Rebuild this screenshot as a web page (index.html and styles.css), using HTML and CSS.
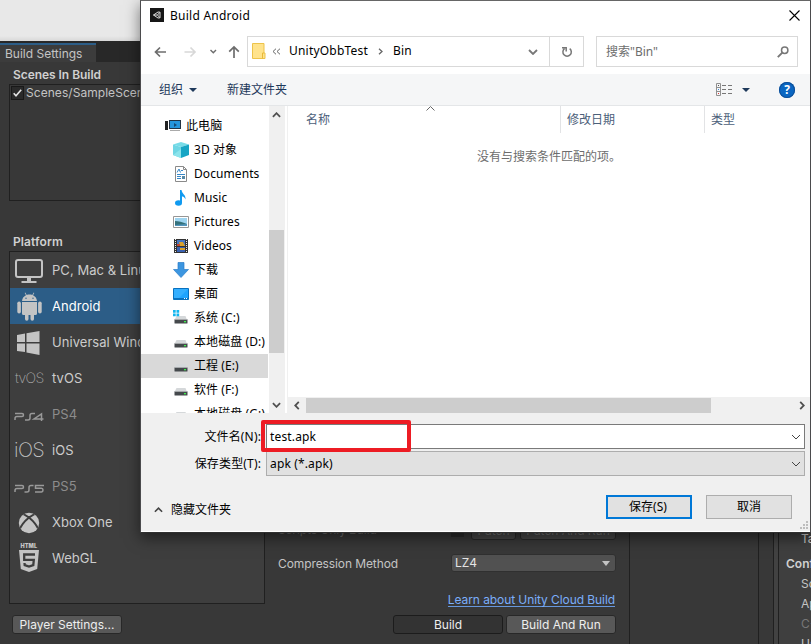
FILE: index.html
```html
<!DOCTYPE html>
<html lang="zh-CN">
<head>
<meta charset="utf-8">
<title>Build Android</title>
<link rel="stylesheet" href="styles.css">
</head>
<body>
<svg width="0" height="0" class="defs">
  <symbol id="drive" viewBox="0 0 16 16"><path d="M3.500 6h9l1.500 4H1.500z" fill="#d5d8da"/><rect x="1.500" y="9.500" width="13" height="4" rx=".5" fill="#45494c"/><rect x="1.500" y="9" width="13" height="1" fill="#a5a8aa"/><rect x="11" y="11" width="2" height="1.300" fill="#3ff04c"/></symbol>
  <symbol id="chev" viewBox="0 0 10 6"><path d="M1 1l4 4 4-4" fill="none" stroke="currentColor"/></symbol>
</svg>
<div class="desktop">
  <section class="settings">
    <div class="tabs"><div class="tab">Build Settings</div></div>
    <h2 class="scenes-title">Scenes In Build</h2>
    <div class="scenes"><span class="check"><svg width="9" height="8" viewBox="0 0 9 8"><path d="M.7 4.300l2.300 2.500L8.200.8" fill="none" stroke="#e4e4e4" stroke-width="1.600"/></svg></span><span>Scenes/SampleScene</span></div>
    <h2 class="platform-title">Platform</h2>
    <div class="columns">
      <div class="platforms">
        <div class="platform"><svg class="pi" viewBox="0 0 30 30"><rect x="2" y="5" width="26" height="17" rx="2" fill="none" stroke="#c4c4c4" stroke-width="2"/><path d="M13 22h4v4h5.500v2H7.500v-2H13z" fill="#c4c4c4"/></svg>PC, Mac &amp; Linux Standalone</div>
        <div class="platform active"><svg class="pi" viewBox="0 0 30 30" fill="#c4c4c4"><path d="M8 10c.3-3 2-4.700 4-5.700L10.700 2l.6-.4 1.400 2.300c1.600-.6 4-.6 5.600 0l1.400-2.300.6.400L19 4.300c2 1 3.700 2.700 4 5.700z"/><path d="M8 11h15v11.500a1.500 1.500 0 0 1-1.500 1.500H20v4a1.700 1.700 0 0 1-3.500 0v-4h-2v4a1.700 1.700 0 0 1-3.500 0v-4H9.500A1.500 1.500 0 0 1 8 22.500z"/><rect x="3.300" y="10.500" width="3.600" height="12" rx="1.800"/><rect x="24.100" y="10.500" width="3.600" height="12" rx="1.800"/><circle cx="12" cy="7.300" r=".7" fill="#2c5d87"/><circle cx="19" cy="7.300" r=".7" fill="#2c5d87"/></svg>Android</div>
        <div class="platform"><svg class="pi" viewBox="0 0 30 30"><path d="M3 8l8-1.400V15H3zM12.500 6.300L25.500 4v11h-13zM3 16.500h8v8.600L3 24zM12.500 16.500h13V28l-13-2.400z" fill="#c4c4c4"/></svg>Universal Windows Platform</div>
        <div class="platform"><span class="wordmark tv">tvOS</span>tvOS</div>
        <div class="platform off"><svg class="pi" viewBox="0 0 30 30"><path d="M1 14.500h7q1.500 0 1.500 1.500T8 17.500H3q-2 0-2 2v1.500M11 21h3q2 0 2-2v-2.500q0-2 2-2h3M27.500 22v-7l-7.500 5h9.500" fill="none" stroke="#999" stroke-width="1.500"/></svg>PS4</div>
        <div class="platform"><span class="wordmark ios">iOS</span>iOS</div>
        <div class="platform off"><svg class="pi" viewBox="0 0 30 30"><path d="M1 14.500h7q1.500 0 1.500 1.500T8 17.500H3q-2 0-2 2v1.500M10.500 21h2.500q2 0 2-2v-2.500q0-2 2-2h2.500M30 14.500h-8.500v2.800h6q1.500 0 1.500 1.800t-1.500 1.900H21" fill="none" stroke="#999" stroke-width="1.500"/></svg>PS5</div>
        <div class="platform"><svg class="pi" viewBox="0 0 30 30"><defs><clipPath id="ball"><circle cx="15" cy="16" r="10.200"/></clipPath></defs><circle cx="15" cy="16" r="10.200" fill="#c4c4c4"/><g clip-path="url(#ball)" fill="none" stroke="#3e3e3e" stroke-width="2"><path d="M4 26Q7 17 15 10.500 23 17 26 26"/><path d="M5 6q5 .5 10 4.500 5-4 10-4.500"/></g></svg>Xbox One</div>
        <div class="platform"><svg class="pi" viewBox="0 0 30 30"><text x="6.500" y="5" class="html-word">HTML</text><path d="M5 7h20l-1.800 19L15 29l-8.200-3z" fill="#c4c4c4"/><path d="M21 11.500H10.200v5.400h9.600l-.5 5.300-4.300 1.400-4.300-1.400-.2-2.200" fill="none" stroke="#3e3e3e" stroke-width="2.300"/></svg>WebGL</div>
      </div>
      <div class="options">
        <div class="opt dim"><span>Scripts Only Build</span><i class="box"></i><b class="ubtn patch">Patch</b><b class="ubtn patchrun">Patch And Run</b></div>
        <div class="opt comp"><span>Compression Method</span><div class="select">LZ4<svg width="8" height="5" viewBox="0 0 8 5"><path d="M0 0h8L4 5z" fill="#c4c4c4"/></svg></div></div>
        <div class="linkrow"><a>Learn about Unity Cloud Build</a></div>
      </div>
    </div>
    <div class="actions"><b class="ubtn player">Player Settings...</b><b class="ubtn build">Build</b><b class="ubtn run">Build And Run</b></div>
  </section>
  <section class="back"></section>
  <section class="gutter"></section>
  <section class="inspector"><p class="in">Target</p><p class="conf">Configuration</p><p class="in">Scripting</p><p class="in">Api</p><p class="in faint">C++</p><p class="in">Use</p></section>
</div>

<div class="dialog">
  <header class="title"><svg width="14" height="14" viewBox="0 0 14 14"><rect width="14" height="14" fill="#161616"/><path d="M3.500 7l4.500-3 2 .2v5.600l-2 .2zM3.500 7h4M7.500 7l2.200-2.500M7.500 7l2.200 2.500" fill="none" stroke="#ddd"/></svg><span>Build Android</span><svg class="close" width="11" height="11" viewBox="0 0 11 11"><path d="M.5.5l10 10M10.500.5l-10 10" stroke="#000" stroke-width="1.100"/></svg></header>
  <div class="nav">
    <div class="arrows"><svg width="90" height="14" viewBox="0 0 90 14" fill="none"><path d="M13 7H2.500M7 2.500L2.500 7 7 11.500" stroke="#6d6d6d" stroke-width="1.700"/><path d="M31.500 7H42M37.500 2.500L42 7l-4.500 4.500" stroke="#d8d8d8" stroke-width="1.700"/><path d="M57.500 5l2.800 2.800L63 5" stroke="#6d6d6d" stroke-width="1.400"/><path d="M81 13V2M76.200 6.700L81 1.900l4.800 4.800" stroke="#6d6d6d" stroke-width="1.700"/></svg></div>
    <div class="address">
      <svg class="folder" width="14" height="17" viewBox="0 0 14 17"><path d="M.5.500h11.500v9.500h1v5.500H.5z" fill="#ffe38c" stroke="#edc34a"/><path d="M10.500 15.500V10h1.500" fill="none" stroke="#e8b93a"/></svg>
      <svg class="dbl" width="9" height="7" viewBox="0 0 9 7"><path d="M4 .7L1 3.500l3 2.800M8 .7L5 3.500l3 2.800" fill="none" stroke="#666"/></svg>
      <span class="crumb">UnityObbTest</span>
      <svg class="sep" width="5" height="7" viewBox="0 0 5 7"><path d="M1 .7l3 2.800-3 2.800" fill="none" stroke="#666" stroke-width="1.300"/></svg>
      <span class="crumb">Bin</span>
      <svg class="drop" width="10" height="6"><path d="M1 1l4 4 4-4" fill="none" stroke="#777" stroke-width="1.800"/></svg>
      <span class="refresh"><svg width="12" height="12" viewBox="0 0 12 12"><path d="M8.700 2.700A4.200 4.200 0 1 1 3.500 2.700M1 1.700h4.200V5.500" fill="none" stroke="#777" stroke-width="1.500"/></svg></span>
    </div>
    <div class="search"><span>搜索"Bin"</span><svg width="12" height="12" viewBox="0 0 12 12"><circle cx="7.700" cy="4.300" r="3.200" fill="none" stroke="#777" stroke-width="1.500"/><path d="M5.300 6.700L.8 11.200" stroke="#777" stroke-width="1.900"/></svg></div>
  </div>
  <div class="toolbar"><span>组织</span><i class="tri"></i><span class="newf">新建文件夹</span>
    <svg class="view" width="17" height="13" viewBox="0 0 17 13"><path d="M.5.500h4v12h-4zM.5 4.500h4M.5 8.500h4" fill="none" stroke="#909090"/><path d="M6 2.500h4M12 2.500h4M6 6.500h4M12 6.500h4M6 10.500h4M12 10.500h4" stroke="#777"/><path d="M2 2.500h1" stroke="#555"/><path d="M2 6.500h1" stroke="#3c8ad8"/><path d="M2 10.500h1" stroke="#d33"/></svg><i class="tri"></i><span class="help">?</span></div>
  <div class="body">
    <div class="tree">
      <div class="node root"><svg viewBox="0 0 16 16"><path d="M0 3h3v9H0z" fill="#222"/><rect x="4.500" y="2.500" width="11" height="8" fill="#2595dc" stroke="#234"/><path d="M9 5l3 2-3 2z" fill="#174a75"/><path d="M5 12.500h10" stroke="#aaa"/></svg>此电脑</div>
      <div class="node"><svg viewBox="0 0 16 16"><path d="M8 0l8 2.500L8 5 0 2.500z" fill="#77dce8"/><path d="M0 2.500L8 5v11l-8-3z" fill="#6fd6e4"/><path d="M16 2.500L8 5v11l8-3z" fill="#16a5c4"/><path d="M0 13l8-6v9z" fill="#8ce4ec"/></svg>3D 对象</div>
      <div class="node"><svg viewBox="0 0 16 16"><path d="M2.500.5h8l3 3v12h-11z" fill="#fff" stroke="#8a8a8a"/><path d="M10.500.5v3h3" fill="none" stroke="#8a8a8a"/><path d="M4 6.500l2-3.500 1.500 3.500M8 4.500h2M4 8.500h8M4 10.500h4M4 12.500h4" fill="none" stroke="#3687c8"/><path d="M9 10h3v3H9z" fill="#5788a5"/></svg>Documents</div>
      <div class="node"><svg viewBox="0 0 16 16"><ellipse cx="5.500" cy="13" rx="3.500" ry="2.700" fill="#109af0"/><path d="M7 13V0h1.500c.5 4 4.500 4.500 4 9.500C11.500 7 10 6.500 9 6.500V13z" fill="#109af0"/></svg>Music</div>
      <div class="node"><svg viewBox="0 0 16 16"><path d="M.5 2.500h15v11H.5z" fill="#fff" stroke="#969696"/><path d="M2 4h12v8H2z" fill="#9ed4f0"/><path d="M2 7q5 0 12 3v2H2z" fill="#34717b"/><path d="M2 11l12-1v2H2z" fill="#5295bd"/></svg>Pictures</div>
      <div class="node"><svg viewBox="0 0 16 16"><path d="M1 1h14v14H1z" fill="#333"/><path d="M4 2h8v6H4z" fill="#4675c0"/><path d="M4 9h8v5H4z" fill="#3961b0"/><path d="M6 4h4l2 4H7zM7 10h5v2H7z" fill="#d9a22b"/><path d="M4 6h3v2H4z" fill="#c44731"/><path d="M2.500 1v14M13.500 1v14" stroke="#eee" stroke-dasharray="1 1"/></svg>Videos</div>
      <div class="node"><svg viewBox="0 0 16 16"><path d="M5 .5h6v7h4.500L8 15.500.5 7.500H5z" fill="#3c96e0" stroke="#2a7dc8" stroke-width=".7"/></svg>下载</div>
      <div class="node"><svg viewBox="0 0 16 16"><path d="M.5 2.500h15v11H.5z" fill="#1ea4ff" stroke="#0871bf"/><path d="M1 3h14L5 13H1z" fill="#34afff"/><path d="M1 12.500h14" stroke="#0871bf"/><path d="M11 12.500h3" stroke="#fff" stroke-dasharray="1 1"/></svg>桌面</div>
      <div class="node"><svg viewBox="0 0 16 16"><use href="#drive"/><path d="M0 0h2.700v2.700H0zM3.500 0h2.700v2.700H3.500zM0 3.500h2.700v2.700H0zM3.500 3.500h2.700v2.700H3.500z" fill="#12b5ee"/></svg>系统 (C:)</div>
      <div class="node"><svg><use href="#drive"/></svg>本地磁盘 (D:)</div>
      <div class="node sel"><svg><use href="#drive"/></svg>工程 (E:)</div>
      <div class="node"><svg><use href="#drive"/></svg>软件 (F:)</div>
      <div class="node"><svg><use href="#drive"/></svg>本地磁盘 (G:)</div>
    </div>
    <div class="vscroll"><svg width="9" height="6" viewBox="0 0 10 6"><path d="M1 5l4-4 4 4" fill="none" stroke="#505050" stroke-width="2"/></svg><i></i><svg width="9" height="6" viewBox="0 0 10 6"><path d="M1 1l4 4 4-4" fill="none" stroke="#505050" stroke-width="2"/></svg></div>
    <div class="files">
      <div class="cols"><span class="c1">名称<svg class="sort" width="9" height="5" viewBox="0 0 9 5"><path d="M.5 4.500l4-4 4 4" fill="none" stroke="#666"/></svg></span><span class="c2">修改日期</span><span class="c3">类型</span></div>
      <p class="empty">没有与搜索条件匹配的项。</p>
      <div class="hscroll"><svg width="6" height="9" viewBox="0 0 6 10"><path d="M5 1L1 5l4 4" fill="none" stroke="#505050" stroke-width="2"/></svg><i></i><svg width="6" height="9" viewBox="0 0 6 10"><path d="M1 1l4 4-4 4" fill="none" stroke="#505050" stroke-width="2"/></svg></div>
    </div>
  </div>
  <footer>
    <div class="field"><label>文件名(N):</label><div class="combo name"><span>test.apk</span><svg width="10" height="6"><use href="#chev"/></svg></div></div>
    <div class="field"><label>保存类型(T):</label><div class="combo type"><span>apk (*.apk)</span><svg width="10" height="6"><use href="#chev"/></svg></div></div>
    <div class="buttons"><svg width="9" height="6" viewBox="0 0 10 6"><path d="M1 5l4-4 4 4" fill="none" stroke="#444" stroke-width="1.800"/></svg><span class="hide">隐藏文件夹</span><b class="save">保存(S)</b><b class="cancel">取消</b></div>
    <svg class="grip" width="8" height="8" fill="#bdbdbd"><path d="M6 0h2v2H6zM3 3h2v2H3zM6 3h2v2H6zM0 6h2v2H0zM3 6h2v2H3zM6 6h2v2H6z"/></svg>
    <div class="highlight"></div>
  </footer>
</div>
</body>
</html>
```
FILE: styles.css
```css
* { box-sizing: border-box; }
body { margin: 0; width: 811px; height: 644px; overflow: hidden; position: relative; background: linear-gradient(#e8e8e8 0 36px, #d8d8d8 41px); }
h2, p { margin: 0; font-size: inherit; }
b { font-weight: 400; }
.defs { position: absolute; }
svg { flex: none; display: block; }

/* editor windows */
.desktop { display: flex; height: 644px; padding-top: 41px; font: 13px/16px Inter, sans-serif; color: #c4c4c4; white-space: nowrap; }
.settings { width: 630px; flex: none; background: #383838; display: flex; flex-direction: column; overflow: hidden; border-right: 1px solid #202020; }
.tabs { height: 21px; flex: none; background: #282828; padding-top: 2px; }
.tab { width: 96px; height: 19px; background: #3c3c3c; border-top: 2px solid #2c5d87; padding: 1px 0 0 5px; font-size: 12px; }
.scenes-title { height: 22px; padding: 5px 0 0 13px; font-weight: 600; font-size: 12px; letter-spacing: -.05px; color: #d0d0d0; }
.scenes { margin-left: 9px; height: 117px; border: 1px solid #202020; display: flex; padding: 0 0 0 1px; gap: 2px; font-size: 12px; letter-spacing: .05px; }
.check { width: 13px; height: 14px; margin-top: 1px; background: #2a2a2a; border: 1px solid #191919; display: flex; align-items: center; justify-content: center; }
.platform-title { height: 50px; padding: 33px 0 0 13px; font-weight: 600; font-size: 12px; color: #d0d0d0; letter-spacing: .1px; }
.columns { display: flex; height: 353px; flex: none; }
.platforms { width: 256px; margin-left: 9px; border: 1px solid #202020; background: #3e3e3e; flex: none; }
.platform { display: flex; align-items: center; height: 36px; padding-left: 4px; color: #ccc; letter-spacing: .05px; overflow: hidden; }
.platform.active { background: #2c5d87; color: #fff; }
.platform.off { color: #8c8c8c; }
.pi { width: 30px; height: 30px; margin-right: 8px; }
.wordmark { width: 37px; margin-left: 1px; flex: none; font-weight: 200; color: #aaa; }
.tv { font-size: 14px; letter-spacing: -.6px; }
.ios { font-size: 20px; color: #c4c4c4; letter-spacing: -.6px; margin-left: 0; margin-right: 1px; }
.html-word { font: 900 5.500px Inter, sans-serif; fill: #c4c4c4; letter-spacing: .1px; }
.options { padding: 271px 0 0 13px; width: 351px; }
.opt { display: flex; align-items: center; font-size: 12px; height: 16px; }
.opt > span { width: 173px; letter-spacing: -.1px; }
.opt.dim { color: #6b6b6b; }
.box { width: 13px; height: 13px; background: #2b2b2b; margin-right: 7px; }
.ubtn { height: 19px; border: 1px solid #282828; border-radius: 3px; background: #585858; color: #eee; text-align: center; line-height: 17px; flex: none; }
.dim .ubtn { background: #464646; color: #727272; }
.patch { width: 45px; margin-right: 4px; }
.patchrun { width: 96px; }
.comp { margin-top: 16px; height: 20px; }
.select { width: 165px; height: 18px; margin-bottom: 2px; background: #515151; border: 1px solid #303030; border-radius: 3px; display: flex; align-items: center; justify-content: space-between; padding: 0 5px 0 3px; color: #e4e4e4; }
.linkrow { display: flex; justify-content: flex-end; margin: 18px 1px 0 0; font-size: 12px; letter-spacing: -.08px; }
.linkrow a { color: #7baefa; border-bottom: 1px solid #6797dd; height: 15px; }
.actions { display: flex; padding: 11px 0 0 12px; font-size: 12px; }
.player { width: 110px; }
.build { width: 110px; margin: 0 3px 0 271px; background: #333; border-color: #1c1c1c; }
.run { width: 110px; }
.back { width: 129px; flex: none; background: #383838; border-right: 1px solid #202020; }
.gutter { width: 15px; flex: none; background: #383838; border-right: 1px solid #202020; }
.inspector { flex: 1; overflow: hidden; background: #3f3f3f; border-left: 4px solid #424242; box-shadow: inset 1px 0 #202020; padding: 490px 0 0 8px; font-size: 12px; }
.inspector p { height: 20px; }
.in { padding-left: 15px; }
.inspector .conf { font-weight: 600; padding-top: 5px; height: 25px; color: #d0d0d0; }
.faint { color: #777; }

/* save dialog */
.dialog { position: absolute; left: 140px; top: 0; width: 671px; height: 533px; border: 1px solid #4b4b4d; border-top-color: #666; border-bottom-color: #303030; background: #fff; font: 12px/16px "Noto Sans", "Noto Sans CJK SC", sans-serif; color: #000; box-shadow: 0 5px 14px rgba(0,0,0,.5); white-space: nowrap; }
.title { height: 28px; display: flex; align-items: center; padding: 0 10px 0 9px; letter-spacing: .25px; }
.title span { margin: 2px 0 0 6px; }
.close { margin-left: auto; }
.nav { height: 45px; display: flex; padding-top: 7px; }
.arrows { width: 106px; padding: 9px 0 0 12px; flex: none; }
.address { width: 337px; height: 31px; border: 1px solid #d9d9d9; display: flex; align-items: center; padding-left: 4px; flex: none; }
.dbl { margin: 0 8px 0 6px; }
.crumb { letter-spacing: .2px; margin-bottom: 2px; }
.sep { margin: 0 10px; }
.drop { margin: 0 11px 0 auto; }
.refresh { width: 34px; height: 29px; border-left: 1px solid #d9d9d9; display: flex; align-items: center; justify-content: center; }
.search { width: 202px; height: 31px; margin-left: 12px; border: 1px solid #d9d9d9; display: flex; align-items: center; justify-content: space-between; padding: 0 8px 0 9px; color: #6d6d6d; }
.toolbar { height: 32px; background: #f5f6f7; border-bottom: 1px solid #e4e6e8; display: flex; align-items: center; padding: 0 15px 0 18px; color: #1e395b; }
.tri { border: 4px solid transparent; border-top: 4px solid #1e395b; border-bottom: 0; margin-left: 6px; }
.newf { margin-left: 30px; }
.view { margin-left: auto; }
.view + .tri { margin: 0 29px 0 9px; }
.help { width: 16px; height: 16px; border-radius: 50%; background: #0a66c2; color: #fff; font-weight: 700; text-align: center; box-shadow: inset 0 0 0 1px #0d4e97; }
.body { display: flex; height: 307px; }
.tree { width: 128px; padding-top: 8px; overflow: hidden; flex: none; }
.node { height: 24px; display: flex; align-items: center; padding-left: 32px; gap: 5px; width: 127px; letter-spacing: .08px; }
.node.root { padding-left: 24px; }
.node svg { width: 16px; height: 16px; }
.node.sel { background: #d9d9d9; }
.vscroll { width: 16px; background: #f0f0f0; display: flex; flex-direction: column; align-items: center; padding: 6px 1px 5px 0; justify-content: space-between; margin-right: 2px; flex: none; }
.vscroll i { width: 15px; height: 123px; background: #cdcdcd; margin-top: 63px; }
.files { flex: 1; border-left: 1px solid #f0f0f0; display: flex; flex-direction: column; }
.cols { display: flex; height: 27px; color: #4c607a; line-height: 27px; }
.c1 { width: 272px; padding-left: 18px; position: relative; }
.sort { position: absolute; left: 138px; top: 0; }
.c2, .c3 { width: 144px; border-left: 1px solid #e2e3e5; padding-left: 6px; }
.c3 { width: 100px; }
.empty { text-align: center; color: #6d6d6d; padding-top: 16px; }
.hscroll { margin-top: auto; height: 16px; background: #f0f0f0; display: flex; align-items: center; padding: 0 5px 0 6px; }
.hscroll i { width: 405px; height: 15px; background: #cdcdcd; margin: 0 auto 0 6px; }
footer { background: #f0f0f0; height: 118px; padding-top: 11px; position: relative; }
.field { display: flex; height: 25px; margin-bottom: 2px; align-items: center; padding-right: 5px; }
.field label { width: 120px; text-align: right; margin-right: 5px; flex: none; letter-spacing: .15px; }
.combo { flex: 1; height: 25px; border: 1px solid #7a7a7a; background: #fff; display: flex; align-items: center; justify-content: space-between; padding: 0 3px; color: #000; letter-spacing: .15px; }
.combo svg { color: #444; }
.combo.type { background: #e1e1e1; border-color: #adadad; }
.buttons { display: flex; align-items: center; padding: 17px 18px 0 13px; }
.hide { margin: 6px auto 0 8px; }
.buttons > svg { margin-top: 6px; }
.save, .cancel { width: 86px; height: 24px; border: 1px solid #adadad; background: #e1e1e1; text-align: center; line-height: 21px; }
.save { border: 2px solid #0078d7; line-height: 19px; margin-right: 14px; padding-right: 2px; }
.grip { position: absolute; right: 2px; bottom: 2px; }
.highlight { position: absolute; left: 120px; top: 7px; width: 150px; height: 32px; border: 4px solid #ed1c24; border-radius: 2px; }
```
